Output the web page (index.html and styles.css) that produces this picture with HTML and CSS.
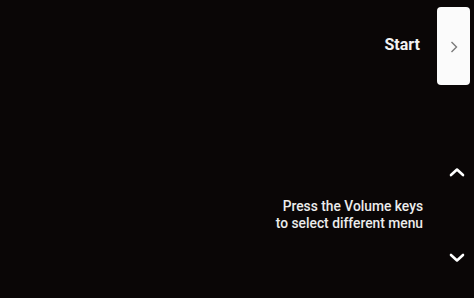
FILE: index.html
```html
<!DOCTYPE html>
<html>
	<head>
		<title>Volume key menu</title>
		<link rel="stylesheet" href="styles.css">
	</head>
	<body>
		<!--screen-->
		<div class="screen">
			<div class="start-label">Start</div>
			<div class="start-card">
				<svg width="8" height="12" viewBox="0 0 8 12"><path d="M1.5 1 L6.5 6 L1.5 11" fill="none" stroke="#7a7a7a" stroke-width="1.4"/></svg>
			</div>
			<div class="hint">
				Press the Volume keys<br>
				to select different menu
			</div>
			<!--volume arrows-->
			<div class="arrows">
				<svg width="16" height="10" viewBox="0 0 16 10"><path d="M2 8 L8 2.5 L14 8" fill="none" stroke="#fff" stroke-width="2.6" stroke-linecap="round" stroke-linejoin="round"/></svg>
				<svg width="16" height="10" viewBox="0 0 16 10"><path d="M2 2 L8 7.5 L14 2" fill="none" stroke="#fff" stroke-width="2.6" stroke-linecap="round" stroke-linejoin="round"/></svg>
			</div>
		</div>
		<!--/screen-->
	</body>
</html>
```

FILE: styles.css
```css
html, body{
	margin:0;
	height:100%;
	background:#0a0606;
}
body{
	font-family:Roboto, "Liberation Sans", sans-serif;
	color:#ececec;
	overflow:hidden;
}
.screen{
	display:grid;
	grid-template-columns:1fr 33px;
	grid-template-rows:78px 1fr;
	column-gap:16px;
	padding:7px 4px 0 0;
	height:291px;
}
.start-label{
	align-self:center;
	justify-self:end;
	font-size:16px;
	font-weight:bold;
	color:#f2f2f2;
	margin-top:-4px;
	margin-right:1px;
}
.start-card{
	background:#fbfbfb;
	border-radius:4px;
	display:flex;
	align-items:center;
	justify-content:center;
	padding-top:2px;
}
.hint{
	justify-self:end;
	text-align:right;
	font-size:13.8px;
	font-weight:500;
	line-height:17px;
	margin-top:113px;
	margin-right:-2px;
}
.arrows{
	display:flex;
	flex-direction:column;
	align-items:center;
	gap:76px;
	padding-top:82px;
	padding-left:6px;
}
.arrows svg{
	display:block;
}
```
